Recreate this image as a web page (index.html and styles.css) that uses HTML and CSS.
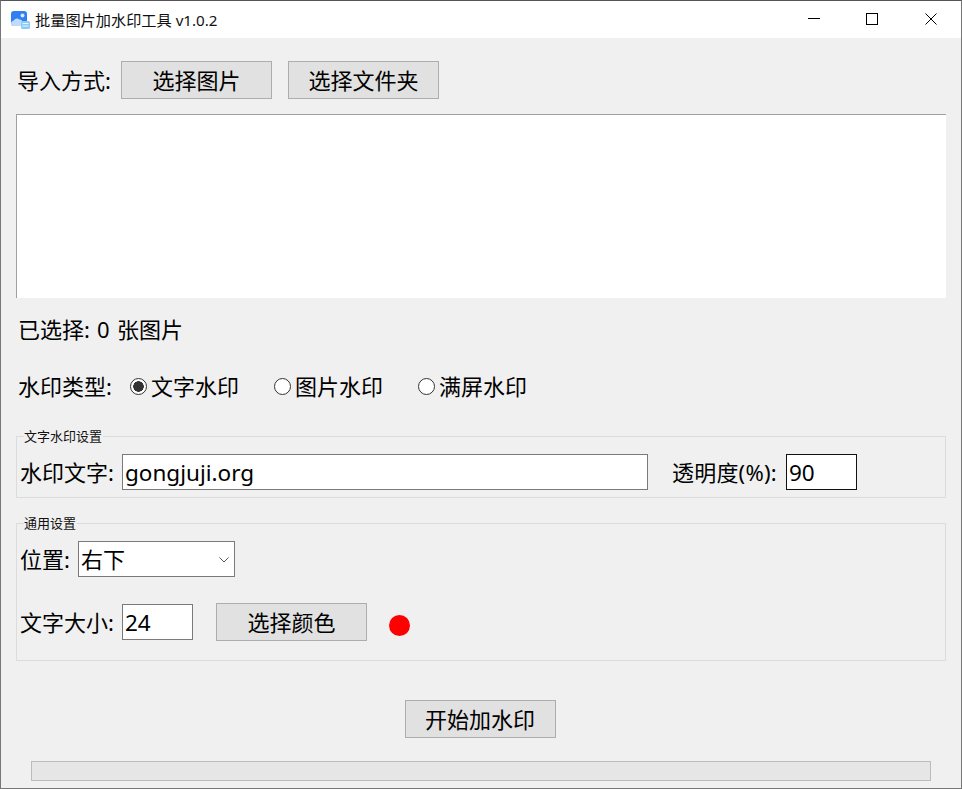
FILE: index.html
```html
<!DOCTYPE html>
<html lang="zh-CN">
<head>
<meta charset="utf-8">
<title>批量图片加水印工具 v1.0.2</title>
<link rel="stylesheet" href="styles.css">
</head>
<body>
<div class="window">
  <header class="titlebar">
    <svg class="app-icon" width="19" height="18" viewBox="0 0 19 18">
      <rect x="0" y="0" width="16" height="15" rx="3" fill="#2f80f2"/>
      <circle cx="11.500" cy="4.500" r="2" fill="#d5e6ff"/>
      <path d="M0 13c0-2.200 1.300-3.500 3-3.600 .7-2.200 3.800-2.800 5.300-.8 1.700-.3 3.200.9 3.200 2.700V15H2.500C1 15 0 14.300 0 13z" fill="#c3dbfb"/>
      <rect x="10" y="10" width="9" height="8" rx="1.500" fill="#8ccbf6"/>
      <path d="M11.500 12.500h6M11.500 15h6" stroke="#e6f5ff" stroke-width="1"/>
    </svg>
    <span class="title">批量图片加水印工具 v1.0.2</span>
    <div class="controls">
      <svg class="ctl" width="12" height="12" viewBox="0 0 12 12"><path d="M0 5.500h12" stroke="#000" stroke-width="1"/></svg>
      <svg class="ctl" width="12" height="12" viewBox="0 0 12 12"><rect x="0.500" y="0.500" width="11" height="11" fill="none" stroke="#000"/></svg>
      <svg class="ctl close" width="12" height="12" viewBox="0 0 12 12"><path d="M0.500 0.500l11 11M11.500 0.500l-11 11" stroke="#000" stroke-width="1"/></svg>
    </div>
  </header>
  <main class="content">
    <div class="row import-row">
      <span class="label">导入方式:</span>
      <button class="btn">选择图片</button>
      <button class="btn">选择文件夹</button>
    </div>
    <div class="list"></div>
    <div class="status">已选择: 0 张图片</div>
    <div class="row radio-row">
      <span class="label">水印类型:</span>
      <span class="radio-item first"><span class="radio checked"></span>文字水印</span>
      <span class="radio-item"><span class="radio"></span>图片水印</span>
      <span class="radio-item"><span class="radio"></span>满屏水印</span>
    </div>
    <section class="group group-text">
      <span class="legend">文字水印设置</span>
      <div class="row">
        <span class="label">水印文字:</span>
        <div class="input wide latin">gongjuji.org</div>
        <span class="label alpha-label">透明度(%):</span>
        <div class="input small focus latin">90</div>
      </div>
    </section>
    <section class="group group-common">
      <span class="legend">通用设置</span>
      <div class="row pos-row">
        <span class="label">位置:</span>
        <div class="input combo">右下
          <svg class="chev" width="10" height="6" viewBox="0 0 10 6"><path d="M0.500 0.500L5 5l4.500-4.500" fill="none" stroke="#555" stroke-width="1"/></svg>
        </div>
      </div>
      <div class="row size-row">
        <span class="label">文字大小:</span>
        <div class="input small light latin">24</div>
        <button class="btn color-btn">选择颜色</button>
        <span class="dot"></span>
      </div>
    </section>
    <div class="start"><button class="btn">开始加水印</button></div>
    <div class="progress"></div>
  </main>
</div>
</body>
</html>
```
FILE: styles.css
```css
* { box-sizing: border-box; }
html, body { margin: 0; padding: 0; }
body {
  width: 962px;
  height: 789px;
  overflow: hidden;
  font-family: "Noto Sans", "Noto Sans CJK SC", sans-serif;
  color: #000;
  background: #f0f0f0;
}
.window {
  width: 962px;
  height: 789px;
  border: 1px solid #777;
  border-top-color: #555;
  display: flex;
  flex-direction: column;
  background: #f0f0f0;
}
.titlebar {
  height: 37px;
  background: #fff;
  display: flex;
  align-items: center;
  flex: none;
}
.app-icon { margin-left: 10px; margin-top: 1px; }
.title { margin-left: 5px; font-size: 15.2px; line-height: 20px; color: #111; }
.controls { margin-left: auto; display: flex; gap: 46px; margin-right: 24px; margin-top: -1px; }
.ctl { display: block; }
.ctl.close { margin-left: 1px; }
.content { flex: 1; padding: 23px 15px 0; display: flex; flex-direction: column; position: relative; }
.row { display: flex; align-items: center; }
.label { font-size: 22px; line-height: 30px; white-space: nowrap; }
.btn {
  font: inherit;
  font-size: 22px;
  line-height: 28px;
  width: 151px;
  height: 38px;
  padding: 0;
  border: 1px solid #adadad;
  background: #e1e1e1;
  color: #000;
}
.import-row { height: 38px; padding-left: 1px; }
.import-row .label { width: 104px; }
.import-row .btn + .btn { margin-left: 16px; }
.list {
  height: 184px;
  margin-top: 15px;
  background: #fff;
  border-top: 1px solid #a0a0a0;
  border-left: 1px solid #a0a0a0;
}
.status { font-size: 22px; line-height: 30px; margin-top: 16px; padding-left: 2px; word-spacing: 1.500px; }
.radio-row { margin-top: 27px; height: 30px; padding-left: 2px; }
.radio-row .label { width: 112px; }
.radio-item { display: flex; align-items: center; font-size: 22px; line-height: 30px; width: 144px; white-space: nowrap; }
.radio {
  width: 17px;
  height: 17px;
  border: 1px solid #333;
  border-radius: 50%;
  background: #fff;
  margin-right: 4px;
  flex: none;
}
.radio.checked { background: radial-gradient(circle, #333 0 5px, #fff 5.500px); }
.group { border: 1px solid #dcdcdc; position: relative; padding-left: 3px; }
.legend {
  position: absolute;
  left: 7px;
  top: -9px;
  font-size: 13px;
  line-height: 16px;
  background: #f0f0f0;
  color: #111;
  padding: 0 1px 0 0;
}
.group-text { height: 62px; margin-top: 35px; padding-top: 17px; }
.group-text .label { width: 102px; }
.input {
  height: 36px;
  background: #fff;
  border: 1px solid #7a7a7a;
  font-size: 22px;
  line-height: 35px;
  padding-left: 2px;
}
.latin { font-size: 22.5px; }
.wide { width: 526px; }
.group-text .label.alpha-label { width: 114px; margin-left: 24px; letter-spacing: 0.2px; }
.small { width: 71px; }
.focus { border-color: #111; }
.group-common { height: 138px; margin-top: 25px; padding-top: 17px; }
.pos-row { height: 36px; }
.pos-row .label { width: 58px; }
.combo { width: 157px; position: relative; }
.chev { position: absolute; right: 5px; top: 15px; }
.size-row { margin-top: 26px; height: 38px; }
.size-row .label { width: 102px; }
.color-btn { margin-left: 23px; }
.dot { width: 21px; height: 21px; background: #f00; border-radius: 50%; margin-left: 22px; margin-top: 7px; }
.start { margin-top: 39px; display: flex; justify-content: center; padding-right: 2px; }
.progress {
  height: 20px;
  width: 900px;
  margin: 23px 0 0 15px;
  background: #e6e6e6;
  border: 1px solid #bcbcbc;
}
```
